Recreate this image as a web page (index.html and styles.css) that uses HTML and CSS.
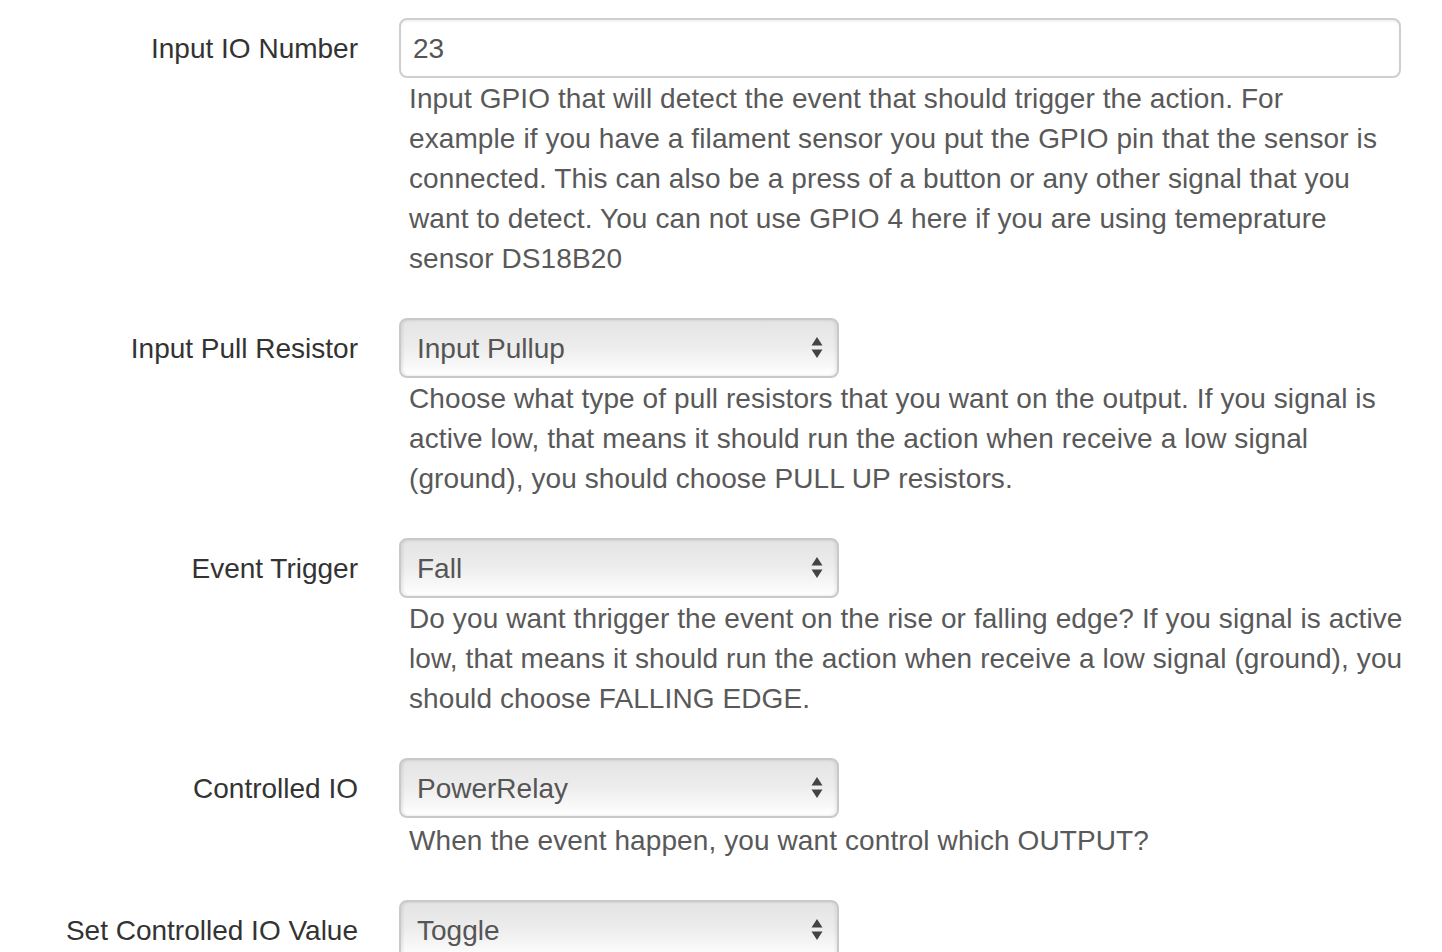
FILE: index.html
```html
<!DOCTYPE html>
<html lang="en">
<head>
<meta charset="utf-8">
<title>Event settings</title>
<link rel="stylesheet" href="styles.css">
</head>
<body>
<form class="form">
  <div class="group">
    <label class="label">Input IO Number</label>
    <div class="controls">
      <div class="text-input">23</div>
      <p class="help">Input GPIO that will detect the event that should trigger the action. For<br>example if you have a filament sensor you put the GPIO pin that the sensor is<br>connected. This can also be a press of a button or any other signal that you<br>want to detect. You can not use GPIO 4 here if you are using temeprature<br>sensor DS18B20</p>
    </div>
  </div>
  <div class="group">
    <label class="label">Input Pull Resistor</label>
    <div class="controls">
      <div class="select"><span>Input Pullup</span><svg class="arrows" width="12" height="22" viewBox="0 0 12 22"><path d="M6 0 L11.5 8.5 L0.5 8.5 Z M0.5 12.5 L11.5 12.5 L6 21 Z" fill="#444"/></svg></div>
      <p class="help">Choose what type of pull resistors that you want on the output. If you signal is<br>active low, that means it should run the action when receive a low signal<br>(ground), you should choose PULL UP resistors.</p>
    </div>
  </div>
  <div class="group">
    <label class="label">Event Trigger</label>
    <div class="controls">
      <div class="select"><span>Fall</span><svg class="arrows" width="12" height="22" viewBox="0 0 12 22"><path d="M6 0 L11.5 8.5 L0.5 8.5 Z M0.5 12.5 L11.5 12.5 L6 21 Z" fill="#444"/></svg></div>
      <p class="help">Do you want thrigger the event on the rise or falling edge? If you signal is active<br>low, that means it should run the action when receive a low signal (ground), you<br>should choose FALLING EDGE.</p>
    </div>
  </div>
  <div class="group">
    <label class="label">Controlled IO</label>
    <div class="controls">
      <div class="select"><span>PowerRelay</span><svg class="arrows" width="12" height="22" viewBox="0 0 12 22"><path d="M6 0 L11.5 8.5 L0.5 8.5 Z M0.5 12.5 L11.5 12.5 L6 21 Z" fill="#444"/></svg></div>
      <p class="help help-single">When the event happen, you want control which OUTPUT?</p>
    </div>
  </div>
  <div class="group">
    <label class="label">Set Controlled IO Value</label>
    <div class="controls">
      <div class="select"><span>Toggle</span><svg class="arrows" width="12" height="22" viewBox="0 0 12 22"><path d="M6 0 L11.5 8.5 L0.5 8.5 Z M0.5 12.5 L11.5 12.5 L6 21 Z" fill="#444"/></svg></div>
    </div>
  </div>
</form>
</body>
</html>
```
FILE: styles.css
```css
html, body {
  margin: 0;
  padding: 0;
  background: #fff;
}
body {
  font-family: "Liberation Sans", Arial, sans-serif;
  font-size: 28px;
  line-height: 40px;
  color: #333;
  overflow: hidden;
  height: 952px;
}
.form {
  padding: 18px 41px 0 38px;
}
.group {
  display: grid;
  grid-template-columns: 320px 1fr;
  column-gap: 41px;
  margin-bottom: 40px;
}
.label {
  text-align: right;
  line-height: 60px;
  padding-top: 1px;
  color: #333;
}
.controls {
  min-width: 0;
}
.text-input {
  box-sizing: border-box;
  height: 60px;
  border: 2px solid #cfcfcf;
  border-radius: 8px;
  padding: 1px 12px 0;
  line-height: 56px;
  color: #555;
  box-shadow: inset 0 2px 2px rgba(0,0,0,0.05);
}
.select {
  box-sizing: border-box;
  width: 440px;
  height: 60px;
  border: 2px solid #c9c9c9;
  border-radius: 8px;
  padding: 0 14px 0 16px;
  display: flex;
  align-items: center;
  justify-content: space-between;
  color: #555;
  background: linear-gradient(to bottom, #e4e4e4 0%, #ececec 45%, #f6f6f6 75%, #ffffff 100%);
  box-shadow: inset 2px 0 3px rgba(0,0,0,0.08), inset -2px 0 3px rgba(0,0,0,0.06);
}
.select span {
  line-height: 56px;
  padding-top: 1px;
}
.arrows {
  display: block;
}
.help {
  margin: 0;
  padding: 1px 0 0 10px;
  margin-bottom: -1px;
  color: #595959;
  letter-spacing: 0.1px;
  white-space: nowrap;
}
.help-single {
  margin-top: 2px;
}
```
